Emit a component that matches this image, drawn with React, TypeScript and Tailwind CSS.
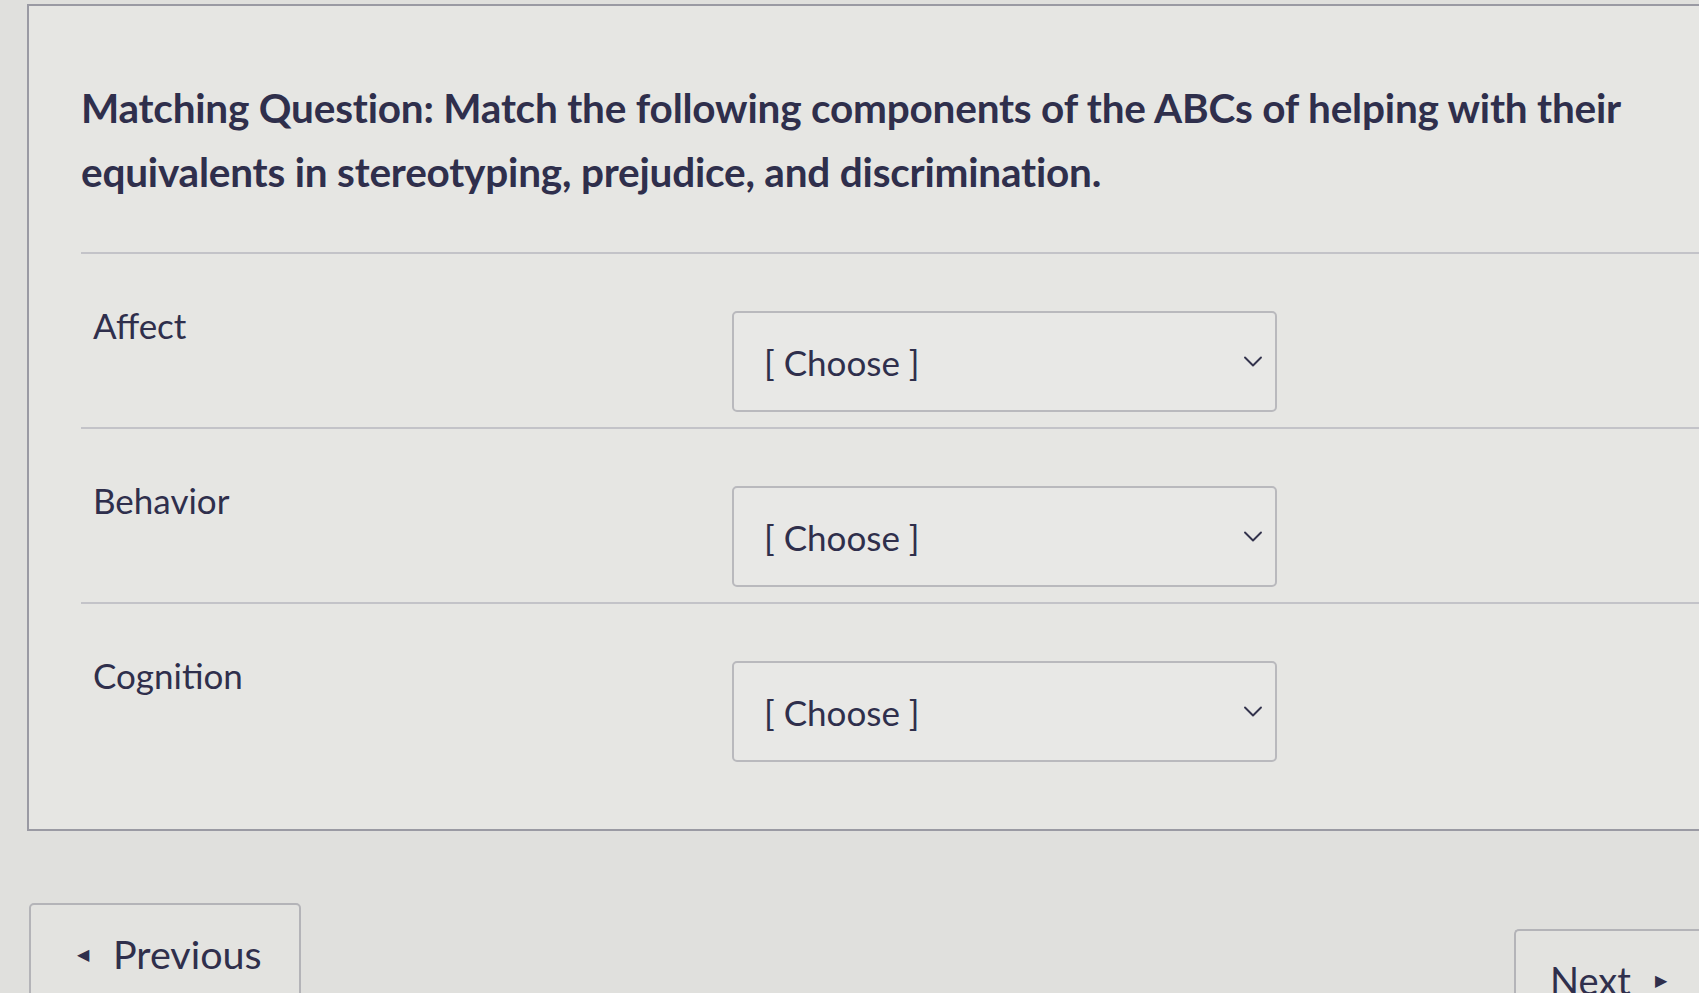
import React from "react";

const rows = ["Affect", "Behavior", "Cognition"];

function Chevron() {
  return (
    <svg width="20" height="13" viewBox="0 0 20 13" fill="none" className="shrink-0">
      <path d="M2 2.5 L10 10.5 L18 2.5" stroke="#33334d" strokeWidth="1.9" strokeLinecap="round" strokeLinejoin="round" />
    </svg>
  );
}

export default function App() {
  return (
    <div className="relative w-[1699px] h-[993px] overflow-hidden bg-[#e0e0dd] text-[#2f2f4c] font-['Lato','Liberation_Sans',sans-serif]">
      <div className="ml-[27px] mt-[4px] h-[827px] border-l-2 border-t-2 border-b-2 border-[#9a9aa3] bg-[#e6e6e3] pl-[52px] pt-[70px]">
        <h1 className="text-[40.5px] leading-[64px] font-bold tracking-[-0.2px] pr-[20px]">
          Matching Question: Match the following components of the ABCs of helping with their equivalents in stereotyping, prejudice, and discrimination.
        </h1>
        <div className="mt-[48px]">
          {rows.map((r) => (
            <div key={r} className="h-[175px] border-t-2 border-[#c3c3c8] flex items-start pt-[57px] pl-[12px]">
              <div className="w-[639px] text-[35px] leading-[40px] -mt-[6px]">{r}</div>
              <div className="w-[545px] h-[101px] rounded-[5px] border-2 border-[#b9b9bd] bg-[#e8e8e6] flex items-center justify-between pl-[30px] pr-[12px]">
                <span className="text-[35px] leading-[40px]">[ Choose ]</span>
                <Chevron />
              </div>
            </div>
          ))}
        </div>
      </div>
      <div className="flex justify-between items-start mt-[72px]">
        <button className="ml-[29px] w-[272px] h-[110px] rounded-t-[5px] border-2 border-[#b4b4b8] bg-[#e3e3e0] flex items-start pt-[26px] pl-[46px] gap-[24px]">
          <span className="text-[16px] leading-[46px] text-[#2f2f4c]">◀</span>
          <span className="text-[39.5px] leading-[46px] text-[#2f2f4c]">Previous</span>
        </button>
        <button className="mt-[26px] w-[185px] h-[100px] rounded-tl-[5px] border-2 border-r-0 border-[#b4b4b8] bg-[#e3e3e0] flex items-start pt-[26px] pl-[34px] gap-[24px]">
          <span className="text-[38px] leading-[46px] text-[#2f2f4c]">Next</span>
          <span className="text-[16px] leading-[46px] text-[#2f2f4c]">▶</span>
        </button>
      </div>
    </div>
  );
}
